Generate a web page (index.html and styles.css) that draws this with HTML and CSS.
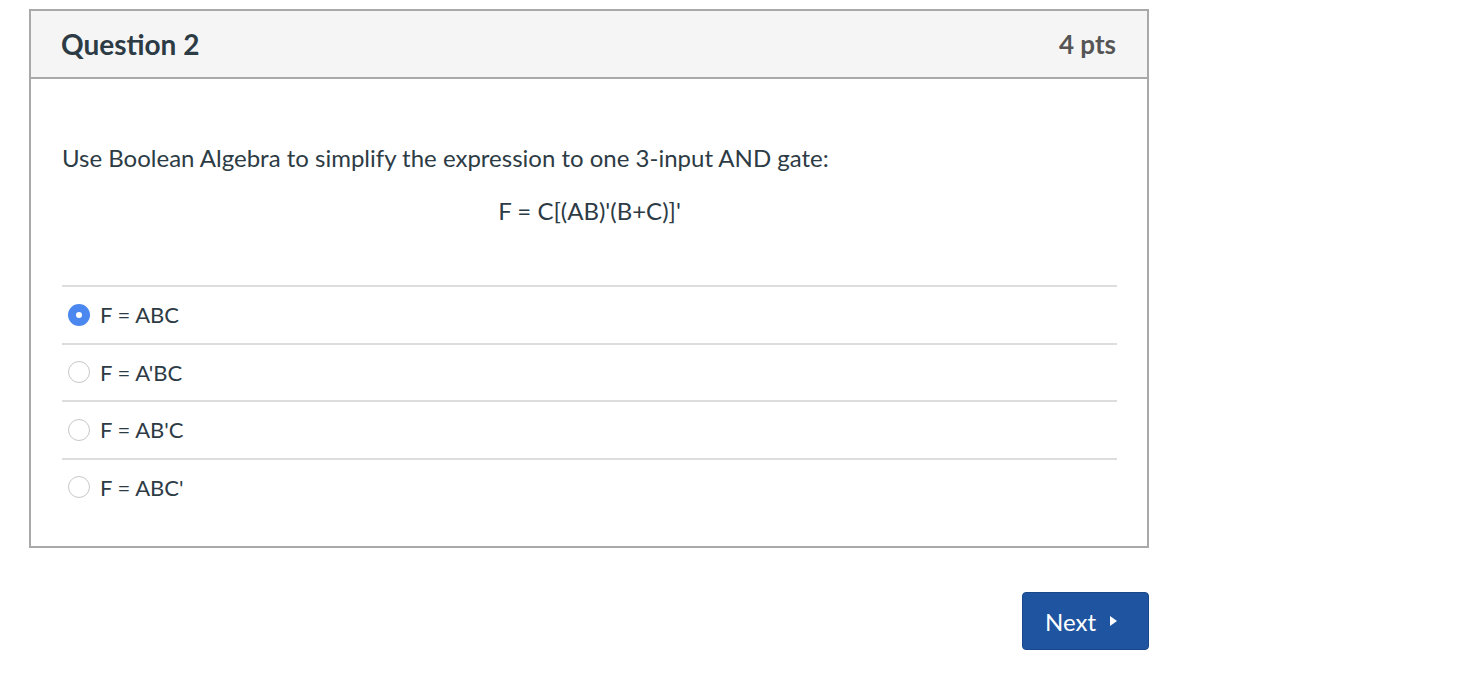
FILE: index.html
```html
<html>
<head>
    <title>Quiz</title>
    <link rel="stylesheet" href="styles.css">
</head>
<body>
    <div class="quiz">
        <div class="question">
            <div class="question-header">
                <span class="question-name">Question 2</span>
                <span class="question-points">4 pts</span>
            </div>
            <div class="question-body">
                <p class="question-text">Use Boolean Algebra to simplify the expression to one 3-input AND gate:</p>
                <p class="question-expr">F = C[(AB)'(B+C)]'</p>
                <div class="answers">
                    <label class="answer">
                        <span class="radio checked"></span>
                        <span class="answer-text">F = ABC</span>
                    </label>
                    <label class="answer">
                        <span class="radio"></span>
                        <span class="answer-text">F = A'BC</span>
                    </label>
                    <label class="answer">
                        <span class="radio"></span>
                        <span class="answer-text">F = AB'C</span>
                    </label>
                    <label class="answer">
                        <span class="radio"></span>
                        <span class="answer-text">F = ABC'</span>
                    </label>
                </div>
            </div>
        </div>
        <div class="actions">
            <button class="next-button">Next <span class="next-arrow"></span></button>
        </div>
    </div>
</body>
</html>
```

FILE: styles.css
```css
html, body {
    margin: 0;
    padding: 0;
    background: #fff;
    font-family: Lato, "Liberation Sans", sans-serif;
    color: #2d3b45;
}

body {
    padding: 9px 0 0 29px;
}

.quiz {
    width: 1120px;
}

.question {
    border: 2px solid #a9a9a9;
}

.question-header {
    display: flex;
    justify-content: space-between;
    align-items: center;
    height: 66px;
    padding: 0 31px 0 30px;
    background: #f5f5f5;
    border-bottom: 2px solid #a9a9a9;
}

.question-name {
    font-size: 28px;
    font-weight: bold;
    color: #2d3b45;
}

.question-points {
    font-size: 26px;
    font-weight: bold;
    color: #555;
}

.question-body {
    padding: 62px 30px 31px 31px;
}

.question-text {
    margin: 0;
    font-size: 24px;
    line-height: 33px;
}

.question-expr {
    margin: 20px 0 0 0;
    font-size: 24px;
    line-height: 33px;
    text-align: center;
}

.answers {
    margin-top: 58px;
}

.answer {
    display: flex;
    align-items: center;
    height: 55.5px;
    border-top: 2px solid #ddd;
}

.radio {
    box-sizing: border-box;
    width: 22px;
    height: 22px;
    margin: 0 10px 0 6px;
    border: 1px solid #c8c8c8;
    border-radius: 50%;
    background: #fff;
}

.radio.checked {
    border: 8px solid #4a88f0;
    background: #fff;
}

.answer-text {
    font-size: 22px;
    color: #2d3b45;
}

.actions {
    display: flex;
    justify-content: flex-end;
    margin-top: 44px;
}

.next-button {
    display: flex;
    align-items: center;
    gap: 14px;
    box-sizing: border-box;
    width: 127px;
    height: 58px;
    padding: 0 0 0 22px;
    border: 1px solid #18488a;
    border-radius: 4px;
    background: #1f55a0;
    color: #fff;
    font-family: Lato, "Liberation Sans", sans-serif;
    font-size: 24px;
}

.next-arrow {
    width: 0;
    height: 0;
    border-top: 5px solid transparent;
    border-bottom: 5px solid transparent;
    border-left: 7px solid #fff;
}
```
